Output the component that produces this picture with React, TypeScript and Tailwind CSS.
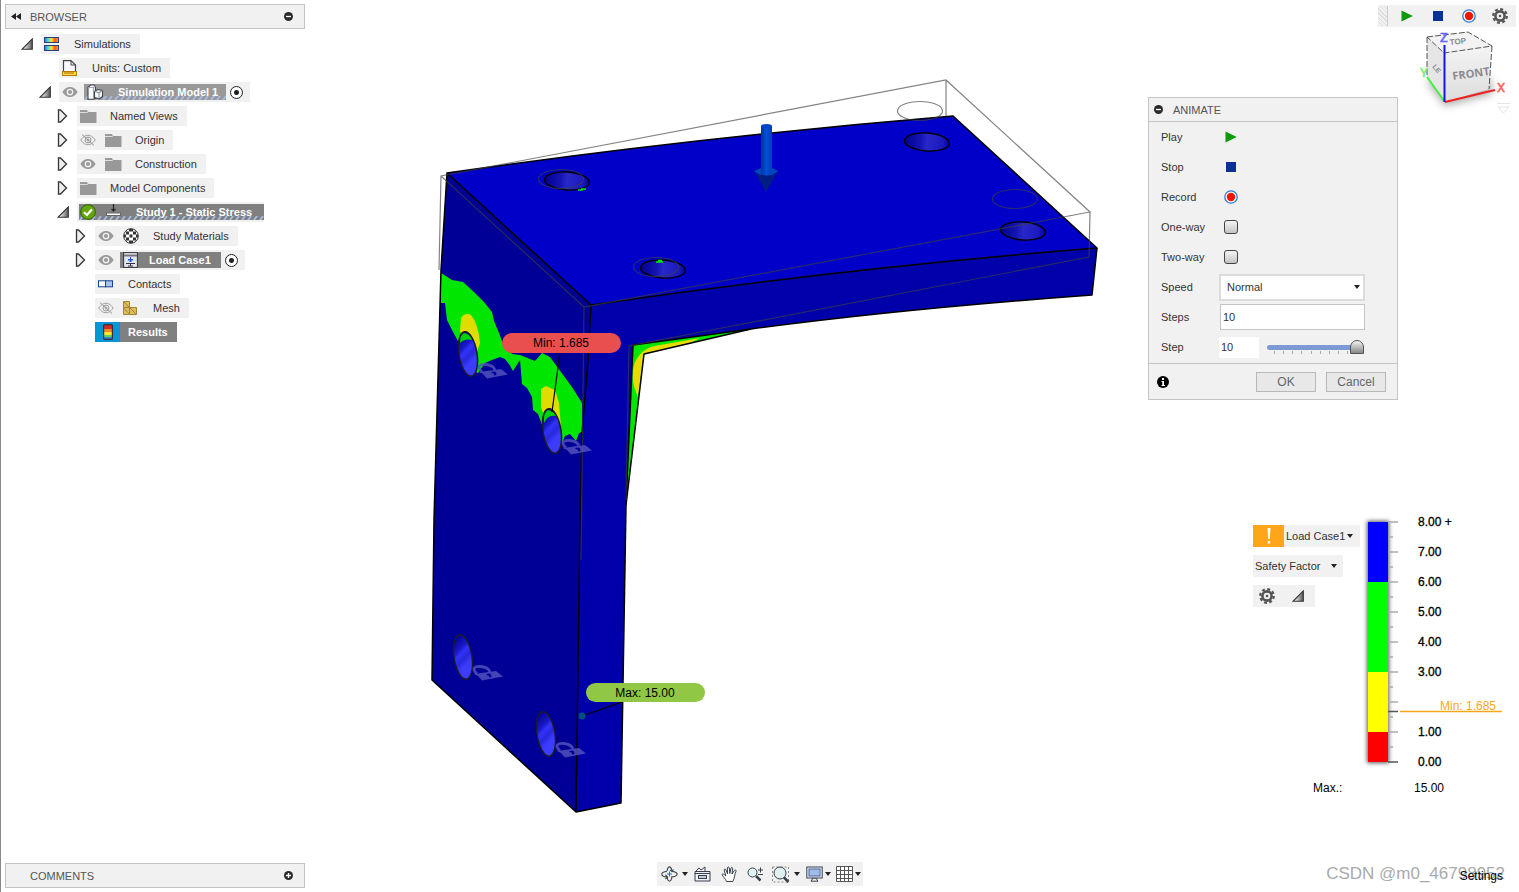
import type { ReactNode } from "react";

function Eye({ off = false }: { off?: boolean }) {
  return (
    <svg width="16" height="12" viewBox="0 0 16 12" fill="none">
      {off ? (
        <g stroke="#999" strokeWidth="1">
          <path d="M.8 6C3.5 2.2 5.6 1.3 8 1.3S12.500 2.200 15.200 6C12.500 9.800 10.400 10.700 8 10.700S3.500 9.800.8 6Z" />
          <circle cx="8" cy="6" r="3" />
          <circle cx="8" cy="6" r="1" />
          <path d="M2 .5 14 11.500" />
        </g>
      ) : (
        <>
          <path d="M.3 6C3 2 5.500 1 8 1S13 2 15.700 6C13 10 10.500 11 8 11S3 10 .3 6Z" fill="#999" />
          <circle cx="8" cy="6" r="2.700" fill="#999" stroke="#f1f1f1" strokeWidth="1.300" />
        </>
      )}
    </svg>
  );
}

function Folder() {
  return (
    <svg width="17" height="14" viewBox="0 0 17 14">
      <path d="M0 1H7L8 3H16.500V14H0Z" fill="#999" />
      <path d="M0 3.500H7.500L8.500 2" stroke="#ddd" fill="none" />
    </svg>
  );
}

function Expanded() {
  return (
    <svg width="12" height="12" viewBox="0 0 12 12">
      <defs>
        <linearGradient id="wedge">
          <stop offset="0.2" stopColor="#eee" />
          <stop offset="1" stopColor="#555" />
        </linearGradient>
      </defs>
      <path d="M11.300.9V11.300H1Z" fill="url(#wedge)" stroke="#333" strokeWidth="1.100" />
    </svg>
  );
}

function Collapsed() {
  return (
    <svg width="11" height="14" viewBox="0 0 11 14">
      <path d="M1.500 1H3.500L9.500 7 3.500 13H1.500Z" fill="#eee" stroke="#333" strokeWidth="1.300" />
    </svg>
  );
}

function SimulationsIcon() {
  return (
    <svg width="16" height="14" viewBox="0 0 16 14">
      <defs>
        <linearGradient id="rainbow">
          <stop offset="0" stopColor="#3366ee" />
          <stop offset="0.250" stopColor="#44ddcc" />
          <stop offset="0.500" stopColor="#ffe030" />
          <stop offset="0.750" stopColor="#ff5522" />
          <stop offset="1" stopColor="#ff9a30" />
        </linearGradient>
      </defs>
      <rect x=".5" y=".5" width="14" height="5" fill="url(#rainbow)" stroke="#27407a" />
      <rect x=".5" y="8.500" width="14" height="5" fill="url(#rainbow)" stroke="#27407a" />
    </svg>
  );
}

function UnitsIcon() {
  return (
    <svg width="16" height="16" viewBox="0 0 16 16">
      <path d="M1.500 12V.6H9L13.500 5V12" fill="#f6f9ff" stroke="#444" strokeWidth="1.200" />
      <path d="M9 1V5H13.500" fill="none" stroke="#444" />
      <rect x=".5" y="11.500" width="14" height="4" fill="#ffd94a" stroke="#b87a00" />
      <path d="M3 12V14M5 12V14M7 12V14M9 12V14M11 12V14" stroke="#a66a00" />
    </svg>
  );
}

function ModelIcon() {
  return (
    <svg width="17" height="16" viewBox="0 0 17 16" fill="#fafcff" stroke="#444" strokeWidth="1.100">
      <path d="M1 3.500 3.500 1H7L8.500 2.500V14L6.500 15.200H1Z" />
      <path d="M1 3.500H6.500V15M6.500 3.500 8.500 2" fill="none" stroke="#9aa4b4" />
      <path d="M7.500 7.500 10.500 5.500 15.500 6.500V12.500L12.500 14.800 7.500 13.500Z" />
      <path d="M7.500 7.500 12 8.800 15.500 6.500M12 8.800V14.500" fill="none" stroke="#8a94a4" />
    </svg>
  );
}

function CheckIcon() {
  return (
    <svg width="16" height="16" viewBox="0 0 16 16">
      <circle cx="8" cy="8" r="7.400" fill="#62a60a" stroke="#33600a" />
      <path d="M4 8.200 7 11 12 5.200" fill="none" stroke="#fff" strokeWidth="2.200" />
    </svg>
  );
}

function StaticIcon() {
  return (
    <svg width="15" height="16" viewBox="0 0 15 16">
      <path d="M7.500 0V7M5.500 5 7.500 7 9.500 5" fill="none" stroke="#222" strokeWidth="1.200" />
      <rect x=".5" y="9" width="14" height="2.500" fill="#fff" stroke="#666" />
    </svg>
  );
}

function MaterialsIcon() {
  return (
    <svg width="16" height="16" viewBox="0 0 16 16">
      <circle cx="8" cy="8" r="7.300" fill="#fff" stroke="#333" />
      <g fill="#333">
        <path d="M6 1H10V3.500H6ZM3 3.500H6V6.500H3ZM10 3.500H13V6.500H10ZM6.500 6.500H9.500V9.500H6.500ZM1 6.500H3V9.500H1ZM13 6.500H15V9.500H13ZM3 9.500H6V12.500H3ZM10 9.500H13V12.500H10ZM6 12.500H10V15H6Z" />
      </g>
    </svg>
  );
}

function LoadCaseIcon() {
  return (
    <svg width="15" height="16" viewBox="0 0 15 16">
      <rect x=".6" y=".6" width="13.800" height="14.800" fill="#dfe6f2" stroke="#333" />
      <path d="M1 3.500H14" stroke="#777" strokeWidth="2" />
      <path d="M7.500 5V10M5 7.500H10M5.500 8 7.500 10 9.500 8" fill="none" stroke="#1c54d0" />
      <path d="M3 11.500H12M7.500 11V14M5 14H10" stroke="#333" />
    </svg>
  );
}

function ContactsIcon() {
  return (
    <svg width="15" height="8" viewBox="0 0 15 8" stroke="#17408c">
      <rect x=".5" y=".8" width="7" height="6" fill="#fff" />
      <rect x="7.500" y=".8" width="7" height="6" fill="#a9c4ec" />
    </svg>
  );
}

function MeshIcon() {
  return (
    <svg width="14" height="14" viewBox="0 0 14 14" fill="#dcbc62" stroke="#a8842c">
      <path d="M.5.500H6.500V6.500H13.500V13.500H.5Z" />
      <path d="M.5 6.500H6.500V13.500M.5.500 6.500 6.500M.5 7 6.500 13M7 7 13 13" fill="none" />
    </svg>
  );
}

function ResultsIcon() {
  return (
    <svg width="10" height="16" viewBox="0 0 10 16">
      <rect x="1" y="1" width="8" height="5" fill="#d62828" />
      <rect x="1" y="5" width="8" height="3" fill="#f08a24" />
      <rect x="1" y="8" width="8" height="3" fill="#ffe32e" />
      <rect x="1" y="11" width="8" height="2" fill="#59d65b" />
      <rect x="1" y="13" width="8" height="2" fill="#3a7be0" />
      <rect x=".6" y=".6" width="8.800" height="14.800" rx="1" fill="none" stroke="#333" strokeWidth="1.200" />
    </svg>
  );
}

function PlayIcon() {
  return (
    <svg width="12" height="12" viewBox="0 0 12 12">
      <path d="M.5.500 11.800 6 .5 11.500Z" fill="#0a9a0a" />
    </svg>
  );
}

function StopIcon() {
  return (
    <svg width="12" height="12" viewBox="0 0 12 12">
      <rect x="1" y="1" width="10" height="10" fill="#0a3296" />
    </svg>
  );
}

function RecordIcon() {
  return (
    <svg width="14" height="14" viewBox="0 0 14 14">
      <circle cx="7" cy="7" r="6.200" fill="#fff" stroke="#2a78d0" strokeWidth="1.300" />
      <circle cx="7" cy="7" r="4.200" fill="#f21400" />
    </svg>
  );
}

function Gear() {
  return (
    <svg width="16" height="16" viewBox="0 0 16 16" fill="none" stroke="#555">
      <circle cx="8" cy="8" r="4.600" strokeWidth="2.600" />
      <circle cx="8" cy="8" r="1.300" fill="#555" stroke="none" />
      <circle cx="8" cy="8" r="6.800" strokeWidth="2.200" strokeDasharray="2.940 2.400" />
    </svg>
  );
}

function Caret() {
  return (
    <svg width="6" height="4" viewBox="0 0 6 4">
      <path d="M0 0H6L3 4Z" fill="#222" />
    </svg>
  );
}

function Knob({ plus = false }: { plus?: boolean }) {
  return (
    <svg width="9" height="9" viewBox="0 0 9 9">
      <circle cx="4.500" cy="4.500" r="4.500" fill="#2b2b2b" />
      <path d={plus ? "M2 4.500H7M4.500 2V7" : "M2 4.500H7"} stroke="#fff" strokeWidth="1.300" />
    </svg>
  );
}

// diagonal dashes along the lower edge of an active row
function Hatch() {
  return (
    <svg className="absolute inset-x-0 bottom-0 h-1 w-full">
      <defs>
        <pattern id="hatch" width="6" height="4" patternUnits="userSpaceOnUse">
          <path d="M1 4 4 0" stroke="#a5bce6" strokeWidth="1.800" />
        </pattern>
      </defs>
      <rect width="100%" height="4" fill="url(#hatch)" />
    </svg>
  );
}

function TreeRow({
  indent,
  open,
  radio,
  children,
}: {
  indent: string;
  open?: boolean;
  radio?: boolean;
  children: ReactNode;
}) {
  return (
    <li className={`flex h-5 items-center ${indent}`}>
      <span className="flex w-5 shrink-0 items-center">
        {open === true && <Expanded />}
        {open === false && <Collapsed />}
      </span>
      <div className="flex h-5 items-center bg-[#f1f1f1]">
        {children}
        {radio && (
          <input
            type="radio"
            aria-label="Activate"
            defaultChecked
            className="mr-[7px] ml-1 size-[13px] appearance-none rounded-full border border-[#222] bg-white bg-[radial-gradient(circle,#222_2px,#fff_3px)]"
          />
        )}
      </div>
    </li>
  );
}

function Slot({ children }: { children: ReactNode }) {
  return <span className="relative z-10 flex w-[25px] shrink-0 items-center pl-[3px]">{children}</span>;
}

function Label({ children }: { children: ReactNode }) {
  return <span className="pr-[9px] pl-2">{children}</span>;
}

const levels = ["pl-5", "pl-[38px]", "pl-14", "pl-[74px]"];

function Browser() {
  return (
    <aside className="flex w-[304px] shrink-0 flex-col pt-1">
      <div className="ml-1 flex h-[25px] items-center border border-[#c4c4c4] bg-[#f1f1f1] pr-[11px] pl-[5px]">
        <svg width="10" height="7" viewBox="0 0 10 7" fill="#222">
          <path d="M5 0V7L0 3.500ZM10 0V7L5 3.500Z" />
        </svg>
        <h2 className="ml-[9px] grow text-[#555]">BROWSER</h2>
        <button type="button" aria-label="Collapse browser">
          <Knob />
        </button>
      </div>
      <ul className="flex flex-col gap-1 pt-[5px]">
        <TreeRow indent={levels[0]} open>
          <Slot><SimulationsIcon /></Slot>
          <Label>Simulations</Label>
        </TreeRow>
        <TreeRow indent={levels[1]}>
          <Slot><UnitsIcon /></Slot>
          <Label>Units: Custom</Label>
        </TreeRow>
        <TreeRow indent={levels[1]} open radio>
          <Slot><Eye /></Slot>
          <span className="relative flex h-4 items-center bg-[#999] font-bold text-white">
            <Slot><ModelIcon /></Slot>
            <span className="relative z-10 pr-2 pl-[9px]">Simulation Model 1</span>
            <Hatch />
          </span>
        </TreeRow>
        <TreeRow indent={levels[2]} open={false}>
          <Slot><Folder /></Slot>
          <Label>Named Views</Label>
        </TreeRow>
        <TreeRow indent={levels[2]} open={false}>
          <Slot><Eye off /></Slot>
          <Slot><Folder /></Slot>
          <Label>Origin</Label>
        </TreeRow>
        <TreeRow indent={levels[2]} open={false}>
          <Slot><Eye /></Slot>
          <Slot><Folder /></Slot>
          <Label>Construction</Label>
        </TreeRow>
        <TreeRow indent={levels[2]} open={false}>
          <Slot><Folder /></Slot>
          <Label>Model Components</Label>
        </TreeRow>
        <TreeRow indent={levels[2]} open>
          <span className="relative ml-[2px] flex h-4 items-center bg-[#808080] font-bold text-white">
            <span className="relative z-10 flex w-6 items-center pl-px"><CheckIcon /></span>
            <Slot><StaticIcon /></Slot>
            <span className="relative z-10 pr-3 pl-2">Study 1 - Static Stress</span>
            <Hatch />
          </span>
        </TreeRow>
        <TreeRow indent={levels[3]} open={false}>
          <Slot><Eye /></Slot>
          <Slot><MaterialsIcon /></Slot>
          <Label>Study Materials</Label>
        </TreeRow>
        <TreeRow indent={levels[3]} open={false} radio>
          <Slot><Eye /></Slot>
          <span className="flex h-4 items-center bg-[#808080] font-bold text-white">
            <Slot><LoadCaseIcon /></Slot>
            <span className="pr-[10px] pl-1">Load Case1</span>
          </span>
        </TreeRow>
        <TreeRow indent={levels[3]}>
          <Slot><ContactsIcon /></Slot>
          <Label>Contacts</Label>
        </TreeRow>
        <TreeRow indent={levels[3]}>
          <Slot><Eye off /></Slot>
          <Slot><MeshIcon /></Slot>
          <Label>Mesh</Label>
        </TreeRow>
        <TreeRow indent={levels[3]}>
          <span className="flex h-5 w-[25px] items-center justify-center bg-[#0696d7]"><ResultsIcon /></span>
          <span className="flex h-5 items-center bg-[#808080] font-bold text-white">
            <Label>Results</Label>
          </span>
        </TreeRow>
      </ul>
    </aside>
  );
}

function Lock({ x, y }: { x: number; y: number }) {
  return (
    <g transform={`translate(${x} ${y})`} opacity="0.800">
      <path d="M4 9C-2 3 2 1 8 1.500 14 2 16 4 17 7" fill="none" stroke="#5555be" strokeWidth="2.800" />
      <path d="M1 9 23 6 30 11.500 9 15.500 5 11Z" fill="#5555be" />
      <path d="M13 9.500Q16 7.500 18 9.500L18.500 12 16 12.500V11Z" fill="#000096" />
    </g>
  );
}

const sideHoles = [[468, 354], [552, 431], [463, 657], [546, 734]];
const topHoles = [[567, 181], [663, 269], [927, 142], [1023, 231]];
const ghostHoles = [[561, 179], [656, 267], [920, 111], [1015, 199]];

function Model() {
  return (
    <svg viewBox="305 0 843 862" className="h-auto w-full" role="img" aria-label="Safety factor result">
      <defs>
        <linearGradient id="bore" x1="0" y1="0" x2="0.300" y2="1">
          <stop offset="0.100" stopColor="#00008c" />
          <stop offset="0.400" stopColor="#1919c8" />
          <stop offset="0.500" stopColor="#3232fa" />
          <stop offset="0.650" stopColor="#2828dc" />
          <stop offset="0.800" stopColor="#3c3cff" />
        </linearGradient>
        <linearGradient id="topBore">
          <stop offset="0" stopColor="#00008c" />
          <stop offset="0.350" stopColor="#1414b4" />
          <stop offset="0.500" stopColor="#2828c8" />
          <stop offset="0.850" stopColor="#1919c0" />
          <stop offset="1" stopColor="#0000a0" />
        </linearGradient>
        <linearGradient id="shaft">
          <stop offset="0" stopColor="#0032a0" />
          <stop offset="0.500" stopColor="#0050d8" />
          <stop offset="1" stopColor="#003cb4" />
        </linearGradient>
      </defs>

      <g strokeLinejoin="round">
        <path d="M447 173 441 270 434 520 432 680 576 812 580 520 582 433 588 360 591 305Z" fill="#000096" />
        <path d="M591 305Q844 268 1097 248L1092 295Q900 309 751 329L633 345 626 505 621 803 576 812 580 520 582 433 588 360Z" fill="#0000aa" />
        <path d="M447 173Q690 138 953 116L1097 248Q844 268 591 305Z" fill="#0000c8" />
        <path d="M751 329 633 345 627 480 626 505 644 354Z" fill="#00e600" />
        <path d="M700 338 660 345Q642 347 635 362 629 378 638 397L644 354 690 343Z" fill="#e6dc00" />
      </g>

      <path
        d="M441 273 452 280 463 282 475 293 484 302 492 312 494 321 499 333 503 344 512 354 520 355 535 361 542 353 550 357 558 368 572 387 582 403V432L579 433 576 441 570 434 565 436 562 443H554L542 425 538 414 533 410 532 397 527 388 522 384 520 360 513 371 509 364 505 359 500 357 492 360 485 363 478 373 468 370 459 343 453 332 447 320 445 303H441Z"
        fill="#00e600"
      />
      <path d="M460 332 461 318Q465 312 471 315 478 323 480 343L477 352 470 338Z" fill="#e0dc00" />
      <path d="M541 407V389L546 386 555 390 559 403 561 427 559 425 550 408 543 413Z" fill="#e0dc00" />

      {sideHoles.map(([x, y]) => (
        <ellipse
          key={`${x}-${y}`}
          cx={x}
          cy={y}
          rx="9"
          ry="22.500"
          transform={`rotate(-9 ${x} ${y})`}
          fill="url(#bore)"
          stroke="#1a1a28"
          strokeWidth="1.500"
        />
      ))}
      <path d="M460 343Q460 335 464 333 470 334 472 340 465 338 460 343M544 423Q543 413 548 410 553 411 556 416 548 414 544 423" fill="#00d200" />
      {topHoles.map(([x, y]) => (
        <ellipse
          key={`${x}-${y}`}
          cx={x}
          cy={y}
          rx="22.500"
          ry="9"
          transform={`rotate(4 ${x} ${y})`}
          fill="url(#topBore)"
          stroke="#000"
          strokeWidth="1.400"
        />
      ))}
      <path d="M656 262H663M658 260.500H662M578 190H583M581 189H586" stroke="#00e600" strokeWidth="1.300" />

      {/* deformed edges */}
      <g fill="none" stroke="#000" strokeWidth="1.500" strokeLinejoin="round">
        <path d="M447 173Q690 138 953 116L1097 248Q844 268 591 305Z" />
        <path d="M447 173 441 270 434 520 432 680 576 812 621 803 626 505 644 354 751 329Q900 309 1092 295L1097 248" />
        <path d="M591 305 588 360 582 433 580 520 576 812M751 329 633 345 626 505" />
      </g>

      {/* undeformed wireframe */}
      <g fill="none" stroke="#404040" strokeOpacity="0.650" strokeWidth="1.200">
        <path d="M439 270 441 176 946 80 1090 212 584 307 441 176M946 80V116M1090 212 1089 257 629 346 626 500M584 307 581 560" />
        {ghostHoles.map(([x, y]) => (
          <ellipse key={`${x}-${y}`} cx={x} cy={y} rx="22.500" ry="9.500" />
        ))}
      </g>

      <Lock x={478} y={363} />
      <Lock x={562} y={439} />
      <Lock x={473} y={665} />
      <Lock x={556} y={742} />

      <path d="M754 171 761 168H772L778 171 766 192Z" fill="#001e82" />
      <path d="M754 171 761 168H772L778 171 772 175H760Z" fill="#0046c0" />
      <path d="M761 126V174Q766 177 772 174V126Z" fill="url(#shaft)" />
      <ellipse cx="766.500" cy="126" rx="5.500" ry="2" fill="#0046c0" />

      <path d="M560 352 552 412M622 702 582 716" stroke="#000" strokeWidth="1.200" />
      <circle cx="582" cy="716" r="3.500" fill="#005080" />
      <rect x="502" y="333" width="119" height="20" rx="10" fill="#ea4f4f" />
      <rect x="586" y="683" width="119" height="19" rx="9.500" fill="#90c846" />
      <g fontSize="12" textAnchor="middle" fill="#000">
        <text x="561" y="347">Min: 1.685</text>
        <text x="645" y="697">Max: 15.00</text>
      </g>
    </svg>
  );
}

function PlaybackBar() {
  return (
    <div className="flex h-[22px] w-[138px] shrink-0 items-center bg-[#f1f1f1]">
      <span className="mr-[3px] h-5 w-[10px] border-r border-[#ccc] bg-[repeating-linear-gradient(45deg,#ddd_0px,#ddd_1px,#f1f1f1_1px,#f1f1f1_3px)]" />
      <button type="button" aria-label="Play" className="flex w-[31px] justify-center"><PlayIcon /></button>
      <button type="button" aria-label="Stop" className="flex w-[31px] justify-center"><StopIcon /></button>
      <button type="button" aria-label="Record" className="flex w-[31px] justify-center"><RecordIcon /></button>
      <button type="button" aria-label="Options" className="flex w-[31px] justify-center"><Gear /></button>
    </div>
  );
}

function ViewCube() {
  return (
    <svg width="100" height="90" viewBox="1416 27 100 90" className="shrink-0">
      <defs>
        <filter id="soft" x="-30%" y="-30%" width="160%" height="160%">
          <feGaussianBlur stdDeviation="4" />
        </filter>
        <linearGradient id="cubeFront" x1="0" y1="0" x2="0" y2="1">
          <stop offset="0" stopColor="#f4f4f4" />
          <stop offset="1" stopColor="#dcdcdc" />
        </linearGradient>
      </defs>
      <path d="M1426 80 1445 106 1492 94 1490 78Z" fill="#888" opacity="0.700" filter="url(#soft)" />
      <path d="M1427 37 1468 32 1492 46 1444 53Z" fill="#f3f3f3" />
      <path d="M1427 37 1444 53 1445 102 1427 77Z" fill="#e6e6e6" />
      <path d="M1444 53 1492 46 1489 89 1445 102Z" fill="url(#cubeFront)" />
      <path d="M1427 37 1468 32 1492 46 1444 53ZM1427 37V77M1492 46 1489 89" fill="none" stroke="#555" strokeDasharray="6 2" />
      <g fill="#888a90" fontWeight="bold">
        <text x="1453" y="80" fontSize="11" fontFamily="Open Sans" transform="rotate(-8 1453 80)">FRONT</text>
        <text x="1450" y="45" fontSize="8" transform="rotate(-6 1450 45)">TOP</text>
        <text x="1432" y="67" fontSize="7" transform="rotate(50 1432 67)">LE</text>
      </g>
      <path d="M1427 77 1445 102" stroke="#40f040" strokeWidth="2" />
      <path d="M1445 102 1495 90" stroke="#f02020" strokeWidth="2" />
      <path d="M1444.500 45V102" stroke="#1414f0" strokeWidth="2" />
      <g fontSize="13" fontFamily="Roboto" strokeWidth="0.500">
        <text x="1440" y="42" fill="#6464ff" stroke="#6464ff">Z</text>
        <text x="1420" y="77" fill="#70f070" stroke="#70f070">Y</text>
        <text x="1497" y="92" fill="#ff6060" stroke="#ff6060">X</text>
      </g>
      <path d="M1497 103.500H1510M1498 107H1509L1503.500 113Z" fill="none" stroke="#e4e4e4" />
    </svg>
  );
}

const rowClass = "flex h-[30px] items-center";
const rowLabel = "w-[58px] shrink-0";
const checkClass =
  "ml-[5px] size-[14px] appearance-none rounded-[3px] border border-[#444] bg-linear-to-b from-[#f4f4f4] to-[#c4c4c4]";

function AnimateDialog() {
  return (
    <section className="mt-[97px] w-[250px] shrink-0 border border-[#c4c4c4] bg-[#f1f1f1]">
      <div className="flex h-6 items-center border-b border-[#c4c4c4] pl-[5px]">
        <button type="button" aria-label="Collapse"><Knob /></button>
        <h2 className="ml-[10px] text-[#555]">ANIMATE</h2>
      </div>
      <div className="pb-px pl-3">
        <div className={rowClass}>
          <span className={rowLabel}>Play</span>
          <button type="button" aria-label="Play animation" className="ml-[6px]"><PlayIcon /></button>
        </div>
        <div className={rowClass}>
          <span className={rowLabel}>Stop</span>
          <button type="button" aria-label="Stop animation" className="ml-[6px]"><StopIcon /></button>
        </div>
        <div className={rowClass}>
          <span className={rowLabel}>Record</span>
          <button type="button" aria-label="Record animation" className="ml-[5px]"><RecordIcon /></button>
        </div>
        <div className={rowClass}>
          <label htmlFor="one-way" className={rowLabel}>One-way</label>
          <input id="one-way" type="checkbox" className={checkClass} />
        </div>
        <div className={rowClass}>
          <label htmlFor="two-way" className={rowLabel}>Two-way</label>
          <input id="two-way" type="checkbox" className={checkClass} />
        </div>
        <div className={rowClass}>
          <label htmlFor="speed" className={rowLabel}>Speed</label>
          <div className="relative">
            <select id="speed" className="h-[27px] w-[146px] appearance-none border-2 border-[#dcdcdc] bg-white pl-[6px]">
              <option>Normal</option>
            </select>
            <span className="pointer-events-none absolute inset-y-0 right-[5px] flex items-center"><Caret /></span>
          </div>
        </div>
        <div className={rowClass}>
          <label htmlFor="steps" className={rowLabel}>Steps</label>
          <input id="steps" type="text" defaultValue="10" className="ml-px h-[26px] w-[145px] border border-[#c4c4c4] bg-white pl-[2px]" />
        </div>
        <div className={rowClass}>
          <label htmlFor="step" className={rowLabel}>Step</label>
          <input id="step" type="text" defaultValue="10" className="h-[21px] w-10 bg-white pl-[2px]" />
          <div className="ml-2 flex w-[97px] flex-col">
            <input
              type="range"
              aria-label="Step"
              min="0"
              max="10"
              defaultValue="10"
              className="relative z-10 h-[14px] w-full appearance-none bg-transparent [&::-webkit-slider-runnable-track]:h-[5px] [&::-webkit-slider-runnable-track]:rounded-full [&::-webkit-slider-runnable-track]:bg-[#7b9ad6] [&::-webkit-slider-thumb]:-mt-[5px] [&::-webkit-slider-thumb]:size-[14px] [&::-webkit-slider-thumb]:appearance-none [&::-webkit-slider-thumb]:rounded-t-full [&::-webkit-slider-thumb]:rounded-b-[3px] [&::-webkit-slider-thumb]:border [&::-webkit-slider-thumb]:border-[#555] [&::-webkit-slider-thumb]:bg-linear-to-b [&::-webkit-slider-thumb]:from-[#f4f4f4] [&::-webkit-slider-thumb]:to-[#888]"
            />
            <div className="-mt-[3px] flex h-[3px] justify-between pr-4 pl-[7px]">
              {Array.from({ length: 9 }, (_, i) => (
                <span key={i} className="w-px bg-[#aaa]" />
              ))}
            </div>
          </div>
        </div>
      </div>
      <div className="flex h-9 items-center gap-[10px] border-t border-[#c4c4c4] pr-[11px] pl-2 text-xs text-[#666]">
        <svg width="12" height="12" viewBox="0 0 12 12" className="mr-auto">
          <circle cx="6" cy="6" r="6" fill="#000" />
          <path d="M5 2H7V4H5ZM4.500 5H7V9H8V10H4.500V9H5.300V6H4.500Z" fill="#fff" />
        </svg>
        <button type="button" className="h-5 w-[60px] border border-[#b8b8b8] bg-[#e8e8e8]">OK</button>
        <button type="button" className="h-5 w-[60px] border border-[#b8b8b8] bg-[#e8e8e8]">Cancel</button>
      </div>
    </section>
  );
}

const scale = ["8.00 +", "7.00", "6.00", "5.00", "4.00", "3.00", "", "1.00", "0.00"];

function Legend() {
  return (
    <section className="mt-28 flex flex-col">
      <div className="flex pl-[105px]">
        <div className="flex w-[107px] shrink-0 flex-col items-start gap-2 pt-[13px]">
          <button type="button" className="flex h-[22px] w-[107px] items-center bg-[#f1f1f1]">
            <span className="flex h-[22px] w-[31px] items-center justify-center bg-[#ffa519]">
              <svg width="4" height="16" viewBox="0 0 4 16" fill="#fff">
                <path d="M.5 0H3.500L2.800 11H1.200ZM.8 13H3.200V15.500H.8Z" />
              </svg>
            </span>
            <span className="px-[2px]">Load Case1</span>
            <Caret />
          </button>
          <button type="button" className="flex h-[22px] items-center bg-[#f1f1f1] pr-[6px] pl-[2px]">
            <span className="pr-[11px]">Safety Factor</span>
            <Caret />
          </button>
          <div className="flex h-[22px] items-center gap-[17px] bg-[#f1f1f1] pr-[11px] pl-[6px]">
            <button type="button" aria-label="Legend options"><Gear /></button>
            <button type="button" aria-label="Resize legend"><Expanded /></button>
          </div>
        </div>
        <svg width="159" height="262" viewBox="1360 512 159 262">
          <defs>
            <filter id="barShadow" x="-50%" y="-5%" width="200%" height="110%">
              <feGaussianBlur stdDeviation="2" />
            </filter>
          </defs>
          <rect x="1367" y="521" width="22" height="242" fill="#555" filter="url(#barShadow)" />
          <rect x="1368" y="522" width="20" height="60" fill="#00f" />
          <rect x="1368" y="582" width="20" height="90" fill="#0f0" />
          <rect x="1368" y="672" width="20" height="60" fill="#ff0" />
          <rect x="1368" y="732" width="20" height="30" fill="#f00" />
          {scale.map((label, i) => (
            <g key={i}>
              <path d={`M1388 ${522 + i * 30}H1398`} stroke={i === 8 ? "#555" : "#aaa"} strokeWidth="1.500" />
              {i < 8 && <path d={`M1388 ${537 + i * 30}H1393`} stroke="#aaa" strokeWidth="1.500" />}
              <text x="1418" y={526 + i * 30} fontSize="12" fill="#000" stroke="#000" strokeWidth="0.300">{label}</text>
            </g>
          ))}
          <path d="M1388 711.500H1398" stroke="#555" strokeWidth="1.500" />
          <path d="M1400 711.500H1502" stroke="#ffa519" strokeWidth="1.500" />
          <text x="1440" y="710" fontSize="12" fill="#ffa519">Min: 1.685</text>
        </svg>
      </div>
      <dl className="flex pt-[6px] pl-[165px] text-xs text-black">
        <dt className="w-[101px]">Max.:</dt>
        <dd>15.00</dd>
      </dl>
    </section>
  );
}

function NavBar() {
  return (
    <nav className="flex h-6 items-center bg-[#f1f1f1] pl-1 [&>button]:flex [&>button]:items-center [&>button]:justify-center">
      <button type="button" aria-label="Orbit" className="w-[27px] gap-1">
        <svg width="17" height="16" viewBox="0 0 17 16" fill="none" stroke="#38404c" strokeWidth="1.100">
          <path d="M6 5.500C-1 6-1 10.500 6 11M10 11C18 10.500 18 6 11 5.500M6 5C7-.5 10-.5 11 5M6 11C7 16.500 10 16.500 11 11" />
          <path d="M4.500 9 6.500 11 4.500 13M12.500 3.500 11 5.500 9 4" />
          <path d="M6 8H11M8.500 5.500V10.500" stroke="#1c74d8" />
        </svg>
        <Caret />
      </button>
      <button type="button" aria-label="Look at" className="w-[29px]">
        <svg width="17" height="16" viewBox="0 0 17 16" fill="#eef2f8" stroke="#38404c">
          <path d="M2 5 5 2 7 4 11 1 11 5" fill="none" />
          <path d="M1 5.500H16V15H1ZM1 7.500H16" />
          <rect x="4.500" y="9.500" width="8" height="3" fill="#c2cad8" />
        </svg>
      </button>
      <button type="button" aria-label="Pan" className="w-[25px]">
        <svg width="17" height="17" viewBox="0 0 17 17" fill="#fff" stroke="#38404c" strokeLinejoin="round">
          <path d="M5.500 15.500C4.500 12.500 2 11 1 8.500 1.500 7.500 3 8 4.800 10L3.200 4C3.300 2.700 4.500 2.800 5 4L6.600 8 6.400 2C6.700.6 8 .7 8.300 2L8.800 7.500 10 2C10.500.9 11.700 1.200 11.600 2.500L11 8 13.500 4.300C14.500 3.500 15.400 4.300 15 5.300 13.500 8.300 14 11.500 11.800 15.500Z" />
        </svg>
      </button>
      <button type="button" aria-label="Zoom" className="w-[27px]">
        <svg width="17" height="16" viewBox="0 0 17 16" fill="none" stroke="#38404c">
          <circle cx="5.500" cy="6.500" r="4.500" fill="#e0f0f4" />
          <path d="M9 10 13.500 14.500" strokeWidth="2.500" />
          <path d="M11 4H16M13.500 1.500V6.500M11 8.500H16" />
        </svg>
      </button>
      <button type="button" aria-label="Fit" className="w-[34px] gap-1">
        <svg width="18" height="17" viewBox="0 0 18 17" fill="none" stroke="#38404c">
          <path d="M.5 1H16.500V16H.5Z" stroke="#888" strokeDasharray="2 2" />
          <circle cx="8" cy="7" r="6" fill="#e0f0ee" />
          <path d="M12 11.500 16.500 16" strokeWidth="2.500" />
        </svg>
        <Caret />
      </button>
      <button type="button" aria-label="Display settings" className="w-[31px] gap-[2px]">
        <svg width="17" height="16" viewBox="0 0 17 16" fill="#e8edf4" stroke="#38404c">
          <path d="M5 15.200H12L10 12H7Z" />
          <rect x=".8" y="1" width="15.400" height="11" />
          <rect x="3" y="3" width="11" height="7" fill="#a2bce8" stroke="#4a66a0" />
        </svg>
        <Caret />
      </button>
      <button type="button" aria-label="Grid" className="w-[29px] gap-[2px]">
        <svg width="17" height="16" viewBox="0 0 17 16" fill="#fff" stroke="#555">
          <path d="M.5.500H16.500V15.500H.5ZM4.500 0V15.500M8.500 0V15.500M12.500 0V15.500M0 4.500H16.500M0 8.500H16.500M0 12.500H16.500" />
        </svg>
        <Caret />
      </button>
    </nav>
  );
}

export default function App() {
  return (
    <div className="flex min-h-screen flex-col overflow-hidden border-l border-[#888] bg-white font-['Liberation_Sans',Arial,sans-serif] text-[11px] leading-4 text-[#333]">
      <div className="flex grow">
        <Browser />
        <main className="min-w-0 grow">
          <Model />
        </main>
        <div className="flex w-[371px] shrink-0 flex-col">
          <div className="flex items-start">
            <AnimateDialog />
            <div className="flex min-w-0 grow basis-0 flex-col items-end pt-[5px] pr-[3px]">
              <PlaybackBar />
              <ViewCube />
            </div>
          </div>
          <Legend />
        </div>
      </div>
      <footer className="grid grid-cols-[1fr_auto_1fr] items-start pb-1">
        <div className="pt-px pl-1">
          <div className="flex h-[25px] w-[300px] items-center border border-[#c4c4c4] bg-[#f1f1f1] pr-[11px] pl-6">
            <h2 className="grow text-[#555]">COMMENTS</h2>
            <button type="button" aria-label="Expand comments"><Knob plus /></button>
          </div>
        </div>
        <NavBar />
        <div className="relative flex h-6 items-center justify-end pr-[14px]">
          <span className="text-[17px] text-[#aaa]">CSDN @m0_46798952</span>
          <span className="absolute right-4 bottom-[2px] text-xs text-black">Settings</span>
        </div>
      </footer>
    </div>
  );
}
